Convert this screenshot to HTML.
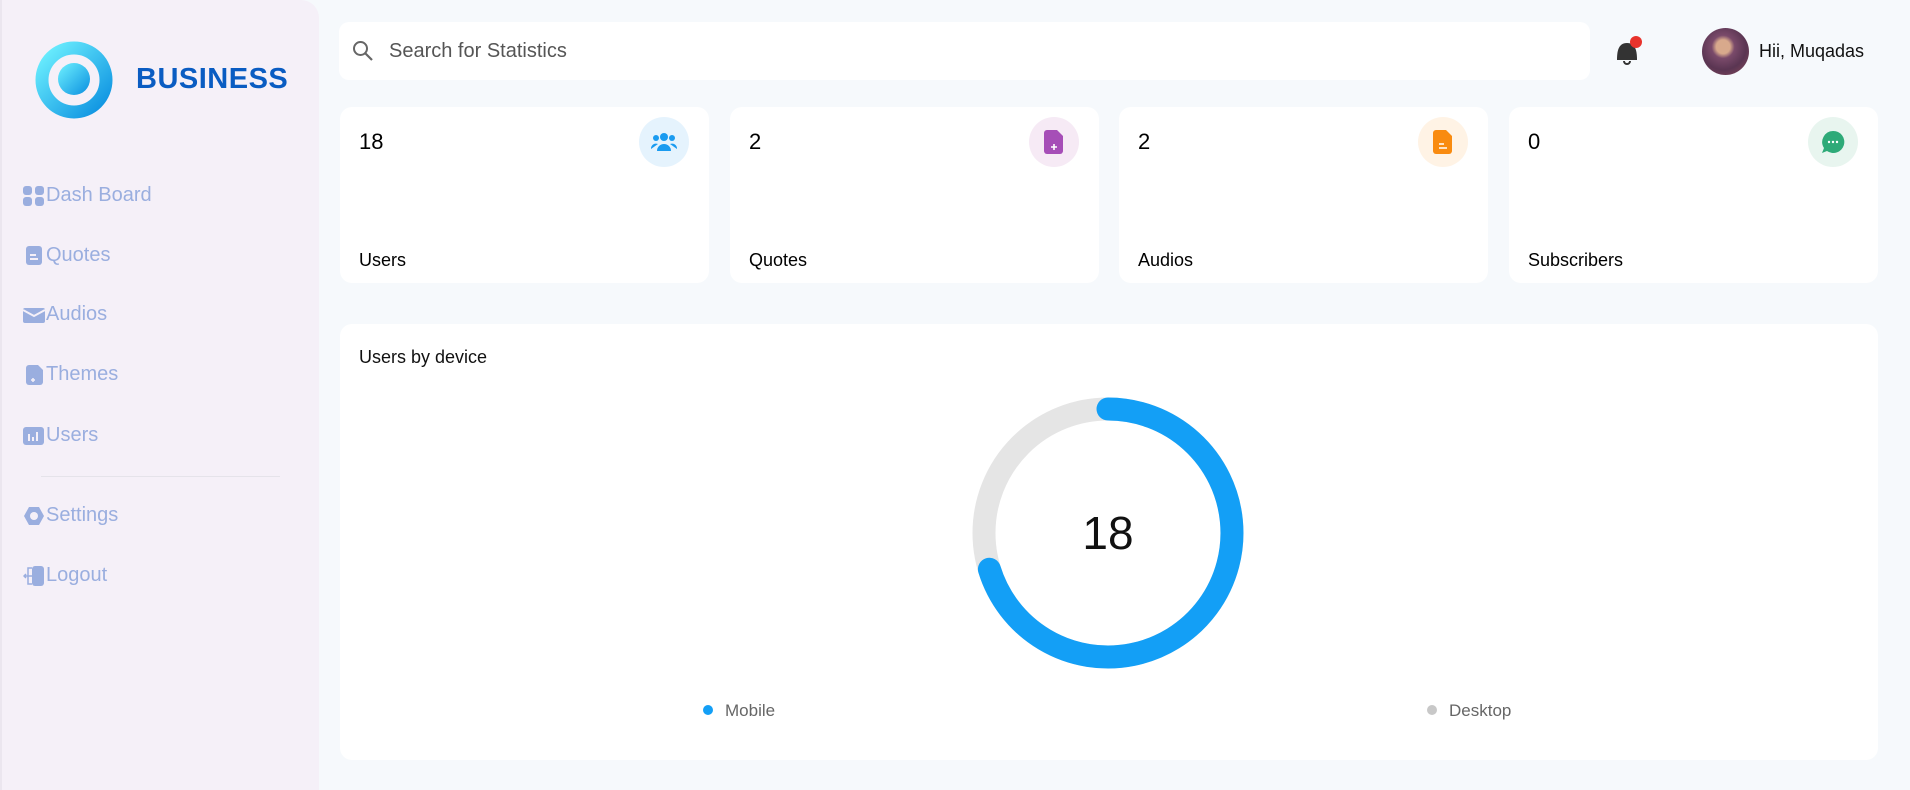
<!DOCTYPE html>
<html><head><meta charset="utf-8"><style>
*{margin:0;padding:0;box-sizing:border-box}
body{width:1910px;height:790px;background:#f6f9fc;font-family:"Liberation Sans",Roboto,sans-serif;position:relative;overflow:hidden}
.side{position:absolute;left:0;top:0;width:319px;height:790px;background:#f5f0f8;border-top-right-radius:18px;border-left:2px solid #ebe6ef}
.nav{position:absolute;left:21px;display:flex;align-items:center;color:#9aaedf;font-size:20px}
.nav svg{width:22px;height:22px;margin-right:1px}
.card{position:absolute;top:107px;width:369px;height:176px;background:#fff;border-radius:12px}
.card .n{position:absolute;left:19px;top:129px;font-size:22px}
.card .n{top:22px}
.card .l{position:absolute;left:19px;top:143px;font-size:18px}
.card .ic{position:absolute;right:20px;top:10px;width:50px;height:50px;border-radius:50%;display:flex;align-items:center;justify-content:center}
</style></head><body>
<div class="side">
<svg style="position:absolute;left:30px;top:38px" width="84" height="84" viewBox="0 0 84 84"><defs><linearGradient id="g" x1="0" y1="0" x2="1" y2="1"><stop offset="0" stop-color="#6ff2ff"/><stop offset="1" stop-color="#0a8fe0"/></linearGradient></defs><circle cx="42" cy="42" r="32" fill="none" stroke="url(#g)" stroke-width="13"/><circle cx="42" cy="41" r="16" fill="url(#g)"/></svg>
<div style="position:absolute;left:134px;top:63px;font-size:29px;font-weight:bold;color:#0a5cc2;letter-spacing:0.5px">BUSINESS</div>
<div class="nav" style="top:184px"><svg viewBox="0 0 22 22"><rect x="0" y="1" width="9" height="9" rx="3" fill="#9aaedf"/><rect x="12" y="1" width="9" height="9" rx="3" fill="#9aaedf"/><rect x="0" y="12" width="9" height="9" rx="3" fill="#9aaedf"/><rect x="12" y="12" width="9" height="9" rx="3" fill="#9aaedf"/></svg>Dash Board</div>
<div class="nav" style="top:244px"><svg viewBox="0 0 22 22"><rect x="3" y="1" width="16" height="19" rx="3" fill="#9aaedf"/><rect x="7" y="9" width="6" height="2" fill="#f5f0f8"/><rect x="7" y="13" width="8" height="2" fill="#f5f0f8"/></svg>Quotes</div>
<div class="nav" style="top:303px"><svg viewBox="0 0 22 22"><rect x="0" y="4" width="22" height="15" rx="2" fill="#9aaedf"/><path d="M0 6 L11 12 L22 6" stroke="#f5f0f8" stroke-width="2" fill="none"/></svg>Audios</div>
<div class="nav" style="top:363px"><svg viewBox="0 0 22 22"><path d="M6 1h9l5 5v12a3 3 0 0 1-3 3H6a3 3 0 0 1-3-3V4a3 3 0 0 1 3-3z" fill="#9aaedf"/><path d="M8 16h4M10 14v4" stroke="#f5f0f8" stroke-width="1.5"/></svg>Themes</div>
<div class="nav" style="top:424px"><svg viewBox="0 0 22 22"><rect x="0" y="2" width="21" height="18" rx="3" fill="#9aaedf"/><path d="M6 9v7M10 12v4M14 7v9" stroke="#f5f0f8" stroke-width="2"/></svg>Users</div>
<div style="position:absolute;left:39px;top:476px;width:239px;height:1px;background:#e5e3ea"></div>
<div class="nav" style="top:504px"><svg viewBox="0 0 22 22"><path d="M6 2h10l5 9-5 9H6L1 11z" fill="#9aaedf"/><circle cx="11" cy="11" r="4" fill="#f5f0f8"/></svg>Settings</div>
<div class="nav" style="top:564px"><svg viewBox="0 0 22 22"><rect x="9" y="1" width="12" height="20" rx="3" fill="#9aaedf"/><path d="M9 3H5v16h4M1 11h8M3 9l-2 2 2 2" stroke="#9aaedf" stroke-width="1.5" fill="none"/></svg>Logout</div>
</div>

<div style="position:absolute;left:339px;top:22px;width:1251px;height:58px;background:#fff;border-radius:10px"></div>
<svg style="position:absolute;left:351px;top:39px" width="24" height="24" viewBox="0 0 24 24"><circle cx="9.5" cy="9.5" r="6.5" stroke="#666" stroke-width="2" fill="none"/><path d="M14.5 14.5L21 21" stroke="#666" stroke-width="2.2"/></svg>
<div style="position:absolute;left:389px;top:40px;font-size:20px;color:#555">Search for Statistics</div>
<svg style="position:absolute;left:1612px;top:34px" width="34" height="34" viewBox="0 0 34 34"><path d="M5 26c0-8 1-17 10-17s10 9 10 17z" fill="#333"/><path d="M12 27a3 3 0 0 0 6 0" stroke="#333" stroke-width="2" fill="none"/><circle cx="24" cy="8" r="6" fill="#e8332c"/></svg>
<div style="position:absolute;left:1702px;top:28px;width:47px;height:47px;border-radius:50%;background:radial-gradient(circle at 45% 40%,#d8a98c 0 18%,#7a4a6a 30%,#5a3552 60%,#8a4a5a)"></div>
<div style="position:absolute;left:1759px;top:41px;font-size:18px;color:#111">Hii, Muqadas</div>

<div class="card" style="left:340px"><div class="n">18</div><div class="l">Users</div><div class="ic" style="background:#e5f3fd"><svg width="26" height="22" viewBox="0 0 26 22"><circle cx="13" cy="6" r="4" fill="#1a9bf0"/><circle cx="5" cy="7" r="3" fill="#1a9bf0"/><circle cx="21" cy="7" r="3" fill="#1a9bf0"/><path d="M6 20a7 7 0 0 1 14 0z M0 18a5 5 0 0 1 7-5 M26 18a5 5 0 0 0-7-5" fill="#1a9bf0"/></svg></div></div>
<div class="card" style="left:730px"><div class="n">2</div><div class="l">Quotes</div><div class="ic" style="background:#f6eaf5"><svg width="20" height="24" viewBox="0 0 20 24"><path d="M3 0h10l6 6v15a3 3 0 0 1-3 3H3a3 3 0 0 1-3-3V3a3 3 0 0 1 3-3z" fill="#a64eb7"/><path d="M7 17h6M10 14v6" stroke="#fff" stroke-width="1.6"/></svg></div></div>
<div class="card" style="left:1119px"><div class="n">2</div><div class="l">Audios</div><div class="ic" style="background:#fff3e5"><svg width="20" height="24" viewBox="0 0 20 24"><path d="M3 0h10l6 6v15a3 3 0 0 1-3 3H3a3 3 0 0 1-3-3V3a3 3 0 0 1 3-3z" fill="#f98b10"/><path d="M6 14h5M6 18h8" stroke="#fff" stroke-width="1.6"/></svg></div></div>
<div class="card" style="left:1509px"><div class="n">0</div><div class="l">Subscribers</div><div class="ic" style="background:#e8f5ef"><svg width="24" height="24" viewBox="0 0 24 24"><path d="M12 1a11 11 0 1 1-6 20l-5 2 2-5A11 11 0 0 1 12 1z" fill="#2eaa78"/><circle cx="8" cy="12" r="1.2" fill="#fff"/><circle cx="12" cy="12" r="1.2" fill="#fff"/><circle cx="16" cy="12" r="1.2" fill="#fff"/></svg></div></div>

<div style="position:absolute;left:340px;top:324px;width:1538px;height:436px;background:#fff;border-radius:12px"></div>
<div style="position:absolute;left:359px;top:347px;font-size:18px;font-weight:500;color:#111">Users by device</div>
<svg style="position:absolute;left:0;top:0" width="1910" height="790"><circle cx="1108" cy="533" r="124" fill="none" stroke="#e5e5e5" stroke-width="23"/><path d="M1108 409 A124 124 0 1 1 989.4 569.3" fill="none" stroke="#139ff6" stroke-width="23" stroke-linecap="round"/><text x="1108" y="549" text-anchor="middle" font-family="Liberation Sans,sans-serif" font-size="46" fill="#111">18</text><circle cx="708" cy="710" r="5" fill="#139ff6"/><circle cx="1432" cy="710" r="5" fill="#c8c8c8"/><text x="725" y="716" font-family="Liberation Sans,sans-serif" font-size="17" fill="#666">Mobile</text><text x="1449" y="716" font-family="Liberation Sans,sans-serif" font-size="17" fill="#666">Desktop</text></svg>
</body></html>
